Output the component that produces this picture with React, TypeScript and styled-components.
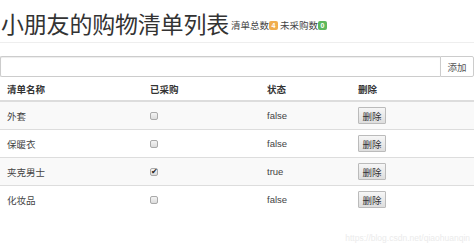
import React, { useState } from "react";
import styled, { createGlobalStyle } from "styled-components";

interface Item {
  name: string;
  bought: boolean;
}

const GlobalStyle = createGlobalStyle`
  html, body {
    margin: 0;
    padding: 0;
    background: #fff;
  }
  body {
    font-family: "Liberation Sans", "Noto Sans CJK SC", sans-serif;
    color: #333;
    font-size: 10px;
  }
`

const Page = styled.div`
  width: 474px;
  height: 247px;
  position: relative;
  overflow: hidden;
`

const Header = styled.div`
  display: flex;
  align-items: flex-end;
  padding: 6px 0 6px 1px;
  height: 30px;
  border-bottom: 1px solid #eee;
  margin-bottom: 13px;
`

const Title = styled.h1`
  margin: 0;
  font-family: "Noto Sans CJK SC", sans-serif;
  font-weight: 400;
  font-size: 23px;
  line-height: 26px;
  letter-spacing: -0.2px;
  color: #333;
`

const Counter = styled.span`
  font-family: "Noto Sans CJK SC", sans-serif;
  font-size: 9.5px;
  color: #444;
  margin-left: 2px;
  margin-bottom: 4px;
  display: flex;
  align-items: center;
`

const Badge = styled.span<{ $color: string }>`
  display: inline-block;
  background: ${(p) => p.$color};
  color: #fff;
  font-family: "Liberation Sans", sans-serif;
  font-weight: 700;
  font-size: 7px;
  line-height: 9px;
  min-width: 5px;
  padding: 0 2px;
  border-radius: 2px;
  text-align: center;
  margin-right: 2px;
`

const InputGroup = styled.div`
  display: flex;
  height: 21px;
`

const TextInput = styled.input`
  flex: 1;
  border: 1px solid #ccc;
  border-right: none;
  border-radius: 2px 0 0 2px;
  box-shadow: inset 0 1px 1px rgba(0, 0, 0, 0.075);
  padding: 0 6px;
  outline: none;
  font-size: 10px;
`

const AddButton = styled.button`
  width: 34px;
  border: 1px solid #ccc;
  border-radius: 0 2px 2px 0;
  background: #fff;
  color: #555;
  font-family: "Noto Sans CJK SC", sans-serif;
  font-size: 9.5px;
  padding: 0;
  cursor: pointer;
`

const Table = styled.table`
  width: 100%;
  border-collapse: collapse;
  margin-top: 1px;
  font-family: "Liberation Sans", "Noto Sans CJK SC", sans-serif;
  font-size: 9.5px;
  table-layout: fixed;
`

const Th = styled.th<{ $w: number }>`
  box-sizing: border-box;
  width: ${(p) => p.$w}px;
  text-align: left;
  font-weight: 700;
  height: 23px;
  padding: 0 7px;
  border-bottom: 2px solid #ddd;
  vertical-align: middle;
`

const Row = styled.tr<{ $striped: boolean }>`
  background: ${(p) => (p.$striped ? "#f9f9f9" : "#fff")};
`

const Td = styled.td`
  height: 27px;
  padding: 0 7px;
  border-top: 1px solid #ddd;
  vertical-align: middle;
  color: #444;
`

const Check = styled.input`
  appearance: none;
  -webkit-appearance: none;
  position: relative;
  margin: 0;
  width: 8px;
  height: 8px;
  border: 1px solid #aaa;
  border-radius: 2px;
  background: linear-gradient(#f4f4f4, #dcdcdc);
  vertical-align: middle;
  cursor: pointer;

  &:checked::after {
    content: "✔";
    position: absolute;
    left: 0;
    top: -2px;
    font-size: 8px;
    line-height: 10px;
    color: #222;
  }
`

const DeleteButton = styled.button`
  font-family: "Noto Sans CJK SC", sans-serif;
  font-size: 9.5px;
  height: 17px;
  width: 28px;
  padding: 0;
  border: 1px solid #bbb;
  border-radius: 1px;
  background: linear-gradient(#f6f6f6, #dedede);
  color: #333;
  cursor: pointer;
`

const Watermark = styled.div`
  position: absolute;
  right: 4px;
  bottom: 4px;
  font-family: "Liberation Sans", sans-serif;
  font-size: 8.5px;
  color: #ebebeb;
`

const initial: Item[] = [
  { name: "外套", bought: false },
  { name: "保暖衣", bought: false },
  { name: "夹克男士", bought: true },
  { name: "化妆品", bought: false },
];

const App: React.FC = () => {
  const [items, setItems] = useState<Item[]>(initial);
  const [text, setText] = useState("");

  const add = () => {
    if (!text.trim()) return;
    setItems([...items, { name: text.trim(), bought: false }]);
    setText("");
  };

  const toggle = (idx: number) => {
    setItems(items.map((it, i) => (i === idx ? { ...it, bought: !it.bought } : it)));
  };

  const remove = (idx: number) => {
    setItems(items.filter((_, i) => i !== idx));
  };

  return (
    <Page>
      <GlobalStyle />
      <Header>
        <Title>小朋友的购物清单列表</Title>
        <Counter>
          清单总数<Badge $color="#f0ad4e">{items.length}</Badge>
          未采购数<Badge $color="#5cb85c">0</Badge>
        </Counter>
      </Header>
      <InputGroup>
        <TextInput value={text} onChange={(e) => setText(e.target.value)} />
        <AddButton onClick={add}>添加</AddButton>
      </InputGroup>
      <Table>
        <thead>
          <tr>
            <Th $w={143}>清单名称</Th>
            <Th $w={117}>已采购</Th>
            <Th $w={91}>状态</Th>
            <Th $w={123}>删除</Th>
          </tr>
        </thead>
        <tbody>
          {items.map((it, i) => (
            <Row key={i} $striped={i % 2 === 0}>
              <Td>{it.name}</Td>
              <Td>
                <Check type="checkbox" checked={it.bought} onChange={() => toggle(i)} />
              </Td>
              <Td>{String(it.bought)}</Td>
              <Td>
                <DeleteButton onClick={() => remove(i)}>删除</DeleteButton>
              </Td>
            </Row>
          ))}
        </tbody>
      </Table>
      <Watermark>https://blog.csdn.net/qiaohuanqin</Watermark>
    </Page>
  );
};

export default App;
